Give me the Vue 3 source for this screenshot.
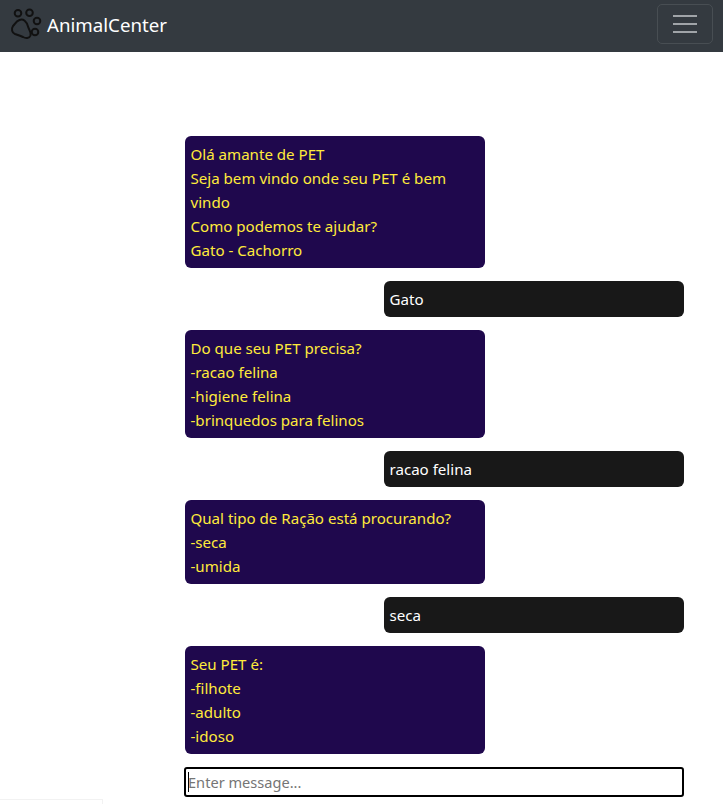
<script setup>
const messages = [
  { from: 'bot', lines: ['Olá amante de PET', 'Seja bem vindo onde seu PET é bem vindo', 'Como podemos te ajudar?', 'Gato - Cachorro'] },
  { from: 'user', lines: ['Gato'] },
  { from: 'bot', lines: ['Do que seu PET precisa?', '-racao felina', '-higiene felina', '-brinquedos para felinos'] },
  { from: 'user', lines: ['racao felina'] },
  { from: 'bot', lines: ['Qual tipo de Ração está procurando?', '-seca', '-umida'] },
  { from: 'user', lines: ['seca'] },
  { from: 'bot', lines: ['Seu PET é:', '-filhote', '-adulto', '-idoso'] }
]
</script>

<template>
  <div class="page">
    <nav class="navbar">
      <a class="brand">
        <svg class="paw" viewBox="0 0 32 32" fill="none" stroke="#111" stroke-width="2">
          <ellipse cx="8" cy="5.200" rx="3.300" ry="3.200" />
          <ellipse cx="19.500" cy="4.800" rx="3.300" ry="3.300" />
          <ellipse cx="27" cy="13" rx="3.300" ry="3.200" />
          <ellipse cx="25" cy="24" rx="3.300" ry="3.300" />
          <path d="M9.500 12C13.500 10.500 16.500 13.500 18 18.500C19 22 21.500 24 20.500 27.500C19.500 30.500 15.500 30.500 13 29C10.500 27.800 8 27 5 26C2 24.800 1 21 3 18C5 16 6 13.300 9.500 12Z" />
        </svg>
        <span>AnimalCenter</span>
      </a>
      <button class="toggler" aria-label="Toggle navigation">
        <span class="bar"></span>
        <span class="bar"></span>
        <span class="bar"></span>
      </button>
    </nav>
    <main class="chat">
      <div v-for="(m, i) in messages" :key="i" class="bubble" :class="m.from">
        <div v-for="(l, j) in m.lines" :key="j">{{ l }}</div>
      </div>
      <div class="entry-wrap">
        <input class="entry" placeholder="Enter message..." />
        <span class="caret"></span>
      </div>
    </main>
    <div class="corner"></div>
  </div>
</template>

<style scoped>
.page {
  position: relative;
  height: 804px;
  overflow: hidden;
  background: #fff;
  font-family: "Noto Sans", "Open Sans", sans-serif;
  font-size: 15.1px;
  line-height: 24px;
}
.navbar {
  height: 52px;
  box-sizing: border-box;
  background: #343a40;
  display: flex;
  align-items: flex-start;
  justify-content: space-between;
  padding: 4px 10px 8px 10px;
}
.brand {
  display: flex;
  align-items: center;
  gap: 5px;
  color: #fff;
  font-size: 18.700px;
  height: 40px;
}
.brand span {
  position: relative;
  top: 1px;
}
.paw {
  width: 32px;
  height: 32px;
}
.toggler {
  width: 56px;
  height: 40px;
  box-sizing: border-box;
  background: transparent;
  border: 1px solid #484e53;
  border-radius: 5px;
  display: flex;
  flex-direction: column;
  align-items: center;
  justify-content: center;
  gap: 6px;
  padding: 0;
}
.bar {
  width: 24px;
  height: 2px;
  background: #a0a4a8;
}
.chat {
  width: 499px;
  margin: 84px 0 0 185px;
  display: flex;
  flex-direction: column;
  gap: 13px;
}
.bubble {
  width: 300px;
  box-sizing: border-box;
  padding: 6px 6px 6px 5.500px;
  border-radius: 6px;
}
.bot {
  background: #1f084d;
  color: #ffeb3b;
}
.user {
  align-self: flex-end;
  background: #181818;
  color: #fff;
}
.entry-wrap {
  position: relative;
  margin-left: -1px;
}
.entry {
  display: block;
  width: 500px;
  height: 30px;
  box-sizing: border-box;
  padding: 0 2px;
  border: 2px solid #000;
  border-radius: 3px;
  font-family: inherit;
  font-size: 14.600px;
  color: #222;
  outline: none;
}
.entry::placeholder {
  color: #757575;
}
.caret {
  position: absolute;
  left: 4px;
  top: 5px;
  width: 1px;
  height: 20px;
  background: #000;
}
.corner {
  position: absolute;
  left: 0;
  top: 799px;
  width: 103px;
  height: 20px;
  box-sizing: border-box;
  border: 1px solid #f2f2f2;
  border-left: none;
}
</style>
